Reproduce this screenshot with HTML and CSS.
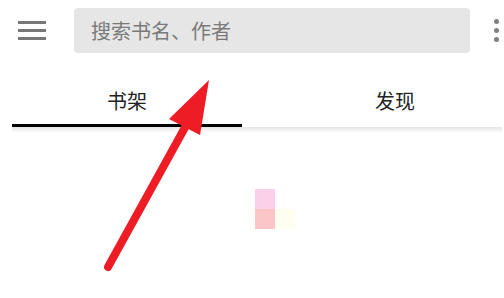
FILE: index.html
```html
<!DOCTYPE html>
<html lang="zh">
<head>
<meta charset="utf-8">
<link rel="stylesheet" href="styles.css">
</head>
<body>
<div class="app">
  <header class="toolbar">
    <div class="menu-btn">
      <span class="bar"></span><span class="bar"></span><span class="bar"></span>
    </div>
    <div class="search">搜索书名、作者</div>
    <div class="more">
      <span class="dot"></span><span class="dot"></span><span class="dot"></span>
    </div>
  </header>
  <nav class="tabs">
    <div class="tab active">书架</div>
    <div class="tab second">发现</div>
  </nav>
  <main class="content">
    <div class="pix">
      <span class="px pink"></span><span class="px none"></span>
      <span class="px salmon"></span><span class="px cream"></span>
    </div>
  </main>
  <svg class="arrow" width="504" height="298" viewBox="0 0 504 298">
    <line x1="108" y1="267" x2="188" y2="122" stroke="#ee1c25" stroke-width="8" stroke-linecap="round"/>
    <polygon points="209,80 169,119 200,135" fill="#ee1c25"/>
  </svg>
</div>
</body>
</html>
```
FILE: styles.css
```css
html, body {
  margin: 0;
  padding: 0;
  background: #fff;
}
body {
  font-family: "Noto Sans CJK SC", "Noto Sans", sans-serif;
  width: 504px;
  height: 298px;
  overflow: hidden;
}
.app {
  position: relative;
  width: 504px;
  height: 298px;
}
.toolbar {
  display: flex;
  align-items: center;
  height: 61px;
}
.menu-btn {
  width: 74px;
  display: flex;
  flex-direction: column;
  gap: 5px;
  padding-left: 18px;
  box-sizing: border-box;
}
.bar {
  display: block;
  width: 28px;
  height: 3px;
  background: #777;
}
.search {
  width: 396px;
  height: 45px;
  margin-top: -1px;
  background: #e6e6e6;
  border-radius: 4px;
  box-sizing: border-box;
  padding-left: 17px;
  font-size: 20px;
  line-height: 45px;
  color: #7a7a7a;
}
.more {
  display: flex;
  flex-direction: column;
  gap: 4px;
  margin-left: 24px;
}
.dot {
  display: block;
  width: 5px;
  height: 5px;
  border-radius: 50%;
  background: #808080;
}
.tabs {
  position: relative;
  display: flex;
  margin-left: 12px;
  width: 490px;
  background: #fff;
}
.tabs::after {
  content: "";
  position: absolute;
  left: 0;
  right: 0;
  top: 100%;
  height: 6px;
  background: linear-gradient(rgba(0, 0, 0, 0.1), rgba(0, 0, 0, 0));
}
.tab {
  box-sizing: border-box;
  padding-top: 28px;
  padding-bottom: 11px;
  line-height: 24px;
  font-size: 20px;
  color: #222;
  text-align: center;
  border-bottom: 3px solid transparent;
}
.tab.active {
  width: 230px;
  border-bottom-color: #000;
}
.tab.second {
  flex: 1;
  padding-left: 46px;
}
.content {
  padding-top: 62px;
  padding-left: 255px;
}
.pix {
  display: grid;
  grid-template-columns: 20px 20px;
  grid-template-rows: 20px 20px;
}
.px { display: block; }
.pink { background: #fbd0e8; }
.salmon { background: #fcc6c8; }
.cream { background: #fffff0; }
.arrow {
  position: absolute;
  left: 0;
  top: 0;
  pointer-events: none;
}
```
